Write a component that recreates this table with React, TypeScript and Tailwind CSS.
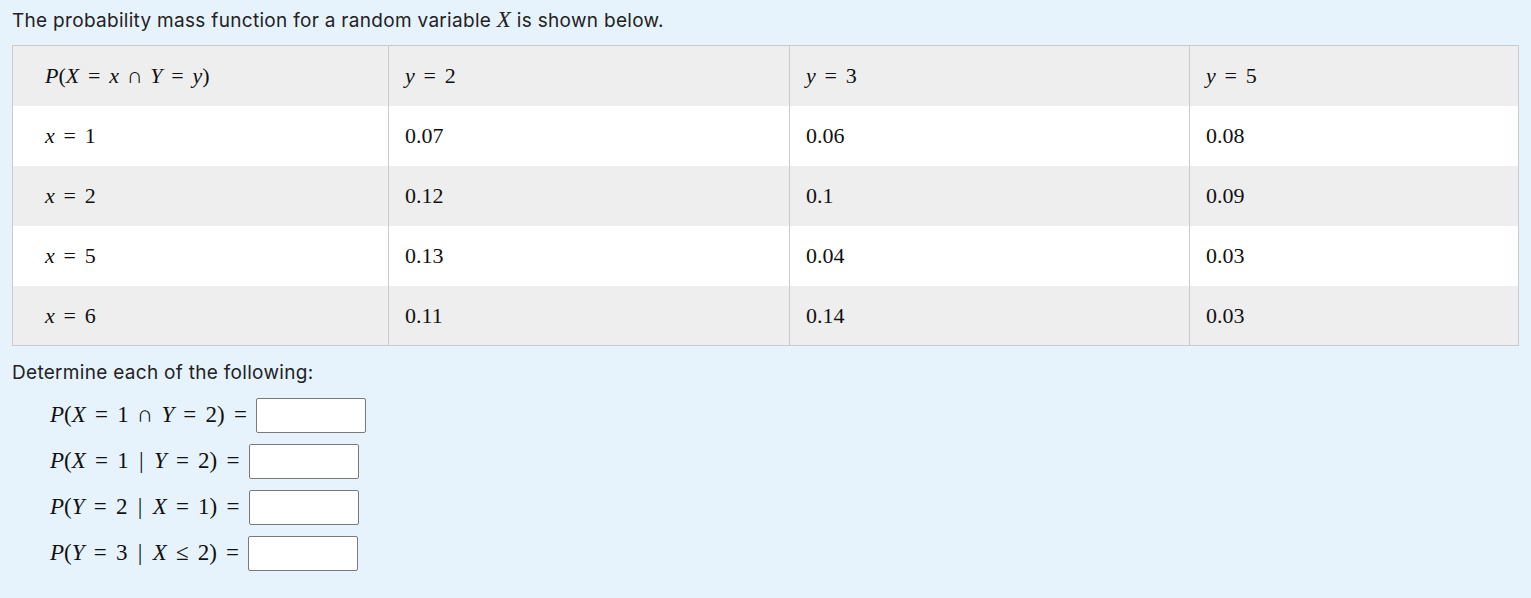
import React from "react";

const serif = { fontFamily: '"Liberation Serif", "DejaVu Serif", serif' };

function V({ children }: { children: React.ReactNode }) {
  return <span className="italic">{children}</span>;
}

function Rel({ children }: { children: React.ReactNode }) {
  return <span className="mx-[0.4em]">{children}</span>;
}

function Bin({ children }: { children: React.ReactNode }) {
  return <span className="mx-[0.35em]">{children}</span>;
}

function Bar() {
  return <span className="mx-[0.45em]">|</span>;
}

function Eq({ v, n }: { v: string; n: string }) {
  return (
    <span className="whitespace-nowrap text-[22px] text-[#111]" style={serif}>
      <V>{v}</V>
      <Rel>=</Rel>
      {n}
    </span>
  );
}

const rows = [
  { x: "1", vals: ["0.07", "0.06", "0.08"] },
  { x: "2", vals: ["0.12", "0.1", "0.09"] },
  { x: "5", vals: ["0.13", "0.04", "0.03"] },
  { x: "6", vals: ["0.11", "0.14", "0.03"] },
];

function Blank() {
  return <input type="text" className="h-[35px] w-[110px] rounded-[2px] border border-[#7a7a7a] bg-white" />;
}

export default function App() {
  return (
    <div className="min-h-[598px] w-full bg-[#e6f3fc] px-3 pt-[8px] text-[#222]" style={{ fontFamily: 'Inter, "Open Sans", sans-serif' }}>
      <p className="text-[19px] leading-[24px] tracking-[0.3px]">
        The probability mass function for a random variable{" "}
        <span className="text-[23px] italic" style={serif}>X</span> is shown below.
      </p>

      <table className="mt-[12px] w-[1507px] border-collapse border border-[#cbcbcb]">
        <colgroup>
          <col className="w-[376px]" />
          <col className="w-[401px]" />
          <col className="w-[400px]" />
          <col />
        </colgroup>
        <thead>
          <tr className="h-[60px] bg-[#eeeeee]">
            <th className="pl-8 text-left font-normal">
              <span className="whitespace-nowrap text-[22px] text-[#111]" style={serif}>
                <V>P</V>(<V>X</V>
                <Rel>=</Rel>
                <V>x</V>
                <Bin>∩</Bin>
                <V>Y</V>
                <Rel>=</Rel>
                <V>y</V>)
              </span>
            </th>
            {["2", "3", "5"].map((y) => (
              <th key={y} className="border-l border-[#cbcbcb] pl-4 text-left font-normal">
                <Eq v="y" n={y} />
              </th>
            ))}
          </tr>
        </thead>
        <tbody>
          {rows.map((r, i) => (
            <tr key={r.x} className={`h-[60px] ${i % 2 === 0 ? "bg-white" : "bg-[#eeeeee]"}`}>
              <td className="pl-8">
                <Eq v="x" n={r.x} />
              </td>
              {r.vals.map((v, j) => (
                <td key={j} className="border-l border-[#cbcbcb] pl-4 text-[22px] text-[#111]" style={serif}>
                  {v}
                </td>
              ))}
            </tr>
          ))}
        </tbody>
      </table>

      <p className="mt-[15px] text-[19px] leading-[24px] tracking-[0.3px]">Determine each of the following:</p>

      <div className="mt-[13px] flex flex-col gap-[11px] pl-[38px] text-[23px] text-[#111]" style={serif}>
        <div className="flex items-center">
          <span className="whitespace-nowrap">
            <V>P</V>(<V>X</V><Rel>=</Rel>1<Bin>∩</Bin><V>Y</V><Rel>=</Rel>2)<Rel>=</Rel>
          </span>
          <Blank />
        </div>
        <div className="flex items-center">
          <span className="whitespace-nowrap">
            <V>P</V>(<V>X</V><Rel>=</Rel>1<Bar /><V>Y</V><Rel>=</Rel>2)<Rel>=</Rel>
          </span>
          <Blank />
        </div>
        <div className="flex items-center">
          <span className="whitespace-nowrap">
            <V>P</V>(<V>Y</V><Rel>=</Rel>2<Bar /><V>X</V><Rel>=</Rel>1)<Rel>=</Rel>
          </span>
          <Blank />
        </div>
        <div className="flex items-center">
          <span className="whitespace-nowrap">
            <V>P</V>(<V>Y</V><Rel>=</Rel>3<Bar /><V>X</V><Rel>≤</Rel>2)<Rel>=</Rel>
          </span>
          <Blank />
        </div>
      </div>
    </div>
  );
}
